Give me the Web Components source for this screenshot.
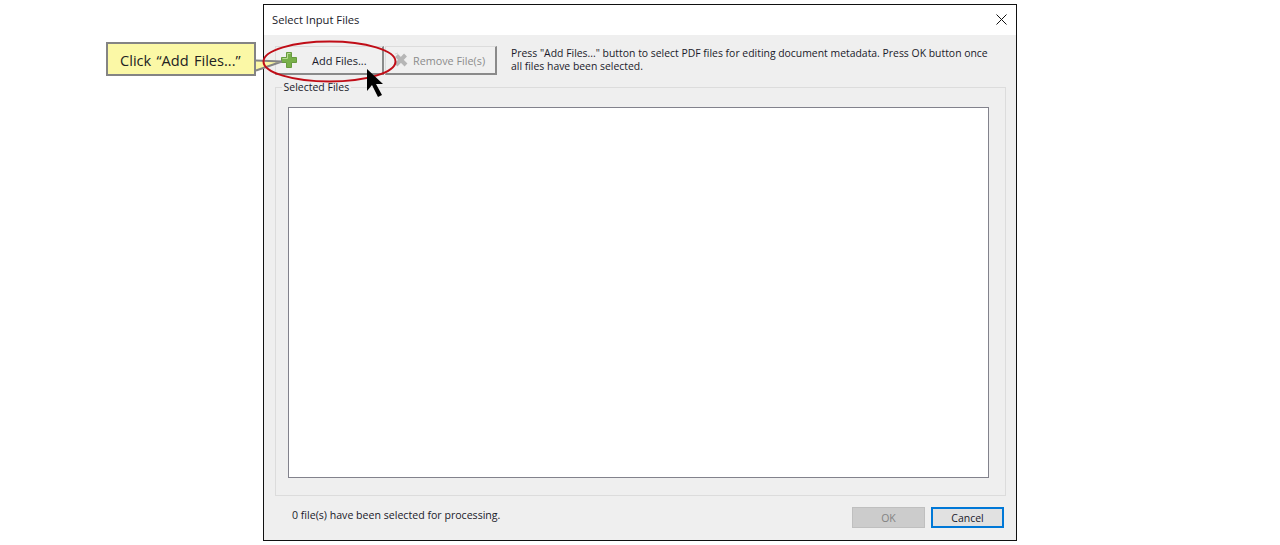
<!DOCTYPE html>
<html>
<head>
<meta charset="utf-8">
<title>Select Input Files</title>
<style>
html, body { margin: 0; background: #fff; }
body { width: 1280px; height: 545px; overflow: hidden; position: relative; font-family: "Open Sans", "Noto Sans", sans-serif; }
</style>
</head>
<body>
<dialog-window heading="Select Input Files">
  <tool-button slot="tools" raised width="109">
    <svg slot="icon" width="16" height="16" viewBox="0 0 16 16"><path d="M5.500 .5h5v5H15.500v5h-5v5h-5v-5H.5v-5h5z" fill="#78b04a" stroke="#679a3e"/><path d="M6.500 6.500v-5h3M1.500 6.500h5" fill="none" stroke="#b7db92"/></svg>
    Add Files...
  </tool-button>
  <tool-button slot="tools" raised disabled width="112">
    <svg slot="icon" width="16" height="16" viewBox="0 0 16 16"><path d="M3.500 3.500l9.500 9.500M12.500 3l-9.500 10" stroke="#b6b6b6" stroke-width="4" fill="none"/><path d="M2 2l3-1" stroke="#d6d6d6" fill="none"/></svg>
    Remove File(s)
  </tool-button>
  <span slot="hint">Press "Add Files..." button to select PDF files for editing document metadata. Press OK button once all files have been selected.</span>
  <group-box slot="body" label="Selected Files"><file-list></file-list></group-box>
  <span slot="status">0 file(s) have been selected for processing.</span>
  <dialog-button slot="actions" disabled>OK</dialog-button>
  <dialog-button slot="actions" focused>Cancel</dialog-button>
</dialog-window>
<call-out>Click “Add Files...”</call-out>
<script>
class DialogWindow extends HTMLElement {
    constructor() {
        super()
        this.attachShadow({ mode: "open" })
    }
    connectedCallback() {
        this.shadowRoot.innerHTML = `
        <style>
            :host {
                display: flex;
                flex-direction: column;
                box-sizing: border-box;
                width: 754px;
                height: 537px;
                margin: 4px 0 0 263px;
                border: 1px solid #111;
                background: #efefef;
                color: #1a1a2a;
                font-size: 10.500px;
            }
            .title {
                display: flex;
                justify-content: space-between;
                align-items: center;
                height: 30px;
                background: #fff;
                padding: 0 9px 2px 8px;
                box-sizing: border-box;
                flex: none;
                font-size: 11.200px;
            }
            .toolbar {
                display: flex;
                height: 43px;
                flex: none;
                padding: 11px 0 0 11px;
                box-sizing: border-box;
                gap: 1px;
            }
            .hint {
                width: 482px;
                margin: 1px 0 0 13px;
                line-height: 13px;
                font-size: 10.420px;
            }
            .body { flex: none; padding: 9px 10px 0 11px; }
            .footer {
                display: flex;
                justify-content: space-between;
                padding: 11px 12px 0 28px;
            }
            .status { margin-top: 1px; font-size: 10.600px; }
            .actions { display: flex; gap: 6px; }
        </style>
        <div class="title">
            <span>${this.getAttribute("heading")}</span>
            <svg width="11" height="11" viewBox="0 0 11 11"><path d="M.5.500l10 10M10.500.500l-10 10" stroke="#111" fill="none"/></svg>
        </div>
        <div class="toolbar">
            <slot name="tools"></slot>
            <div class="hint"><slot name="hint"></slot></div>
        </div>
        <div class="body"><slot name="body"></slot></div>
        <div class="footer">
            <div class="status"><slot name="status"></slot></div>
            <div class="actions"><slot name="actions"></slot></div>
        </div>`
    }
}

class ToolButton extends HTMLElement {
    constructor() {
        super()
        this.attachShadow({ mode: "open" })
    }
    connectedCallback() {
        const w = this.getAttribute("width")
        this.shadowRoot.innerHTML = `
        <style>
            :host {
                display: flex;
                align-items: center;
                box-sizing: border-box;
                width: ${w}px;
                height: 29px;
                background: #f0f0f0;
                border: 1px solid #dcdcdc;
                border-right: 2px solid #8a8a8a;
                border-bottom: 2px solid #8a8a8a;
                padding-left: 5px;
                font-size: 11px;
            }
            :host([disabled]) { color: #8c8c8c; padding-left: 7px; font-size: 10.800px; }
            .icon { display: flex; width: 16px; margin-right: 15px; }
            :host([disabled]) .icon { margin-right: 4px; }
        </style>
        <span class="icon"><slot name="icon"></slot></span>
        <slot></slot>`
    }
}

class GroupBox extends HTMLElement {
    constructor() {
        super()
        this.attachShadow({ mode: "open" })
    }
    connectedCallback() {
        this.shadowRoot.innerHTML = `
        <style>
            :host {
                display: block;
                position: relative;
                box-sizing: border-box;
                width: 731px;
                height: 409px;
                border: 1px solid #dcdcdc;
                padding: 19px 16px 0 12px;
            }
            .label {
                position: absolute;
                top: -7px;
                left: 5.500px;
                padding: 0 2px;
                line-height: 13px;
                background: #efefef;
            }
        </style>
        <span class="label">${this.getAttribute("label")}</span>
        <slot></slot>`
    }
}

class FileList extends HTMLElement {
    constructor() {
        super()
        this.attachShadow({ mode: "open" })
        this.shadowRoot.innerHTML = `
        <style>
            :host {
                display: block;
                box-sizing: border-box;
                height: 371px;
                background: #fff;
                border: 1px solid #82828c;
            }
        </style>`
    }
}

class DialogButton extends HTMLElement {
    constructor() {
        super()
        this.attachShadow({ mode: "open" })
        this.shadowRoot.innerHTML = `
        <style>
            :host {
                display: flex;
                align-items: center;
                justify-content: center;
                box-sizing: border-box;
                width: 73px;
                height: 21px;
                background: #e1e1e1;
                border: 1px solid #adadad;
            }
            :host([disabled]) { background: #cccccc; border-color: #bfbfbf; color: #838383; }
            :host([focused]) { border: 2px solid #0078d7; }
        </style>
        <slot></slot>`
    }
}

class CallOut extends HTMLElement {
    constructor() {
        super()
        this.attachShadow({ mode: "open" })
        this.shadowRoot.innerHTML = `
        <style>
            :host {
                position: absolute;
                left: 106px;
                top: 42px;
                display: flex;
                align-items: center;
                box-sizing: border-box;
                width: 150px;
                height: 34px;
                padding: 2px 0 0 12px;
                background: #fbf8a6;
                border: 2px solid #848484;
                font-size: 14.600px;
                word-spacing: 1.500px;
                color: #222;
                white-space: nowrap;
            }
            svg { position: absolute; left: 0; top: 0; overflow: visible; }
        </style>
        <slot></slot>
        <svg class="notes" width="1" height="1">
            <!-- pointer, ring and mouse cursor, in callout coordinates -->
            <path d="M148 17L174 17.500 148 27z" fill="#fbf8a6"/>
            <path d="M148 16.500L174 17.500 148 26.500" fill="none" stroke="#848484" stroke-width="2"/>
            <ellipse cx="221.500" cy="17.500" rx="66" ry="20" fill="none" stroke="#c00d17" stroke-width="2"/>
            <path d="M259 25V47L264 41 270 53 274 51 268 40 275 40z" fill="#000"/>
        </svg>`
    }
}

customElements.define("dialog-window", DialogWindow)
customElements.define("tool-button", ToolButton)
customElements.define("group-box", GroupBox)
customElements.define("file-list", FileList)
customElements.define("dialog-button", DialogButton)
customElements.define("call-out", CallOut)
</script>
</body>
</html>
